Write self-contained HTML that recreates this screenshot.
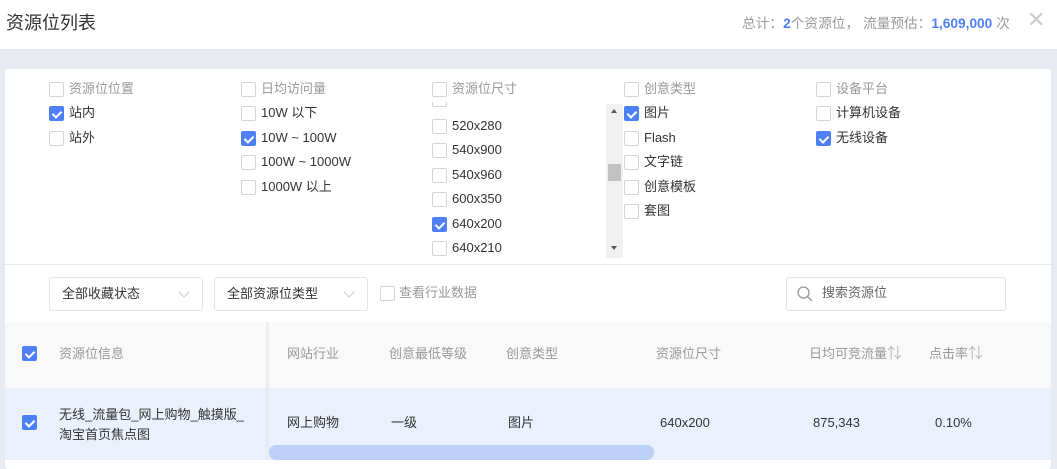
<!DOCTYPE html>
<html><head><meta charset="utf-8"><style>
*{box-sizing:border-box;margin:0;padding:0}
body{width:1057px;height:468px;overflow:hidden;background:#e8ebf2;font-family:"Liberation Sans","Noto Sans CJK SC",sans-serif;position:relative;color:#333}
.a{position:absolute;white-space:nowrap}
.cb{position:absolute;width:15px;height:15px;border:1px solid #d4d4d4;border-radius:2px;background:#fff}
.cb.on{background:#4f80f7;border-color:#4f80f7}
.cb.on::after{content:"";position:absolute;left:4px;top:1.5px;width:4px;height:7px;border:solid #fff;border-width:0 2px 2px 0;transform:rotate(45deg)}
.t{position:absolute;font-size:13px;line-height:16px;color:#333;white-space:nowrap}
.g{color:#999}
.sel{position:absolute;top:277px;height:34px;border:1px solid #e3e3e3;border-radius:3px;background:#fff;font-size:13px;line-height:32px;padding-left:12px;color:#333}
.sel::after{content:"";position:absolute;right:14px;top:10px;width:7px;height:7px;border:solid #ccc;border-width:0 1px 1px 0;transform:rotate(45deg)}
.h{position:absolute;top:346px;font-size:13px;line-height:16px;color:#999;white-space:nowrap}
.d{position:absolute;top:415px;font-size:13px;line-height:16px;color:#333;white-space:nowrap}
</style></head><body>
<div class="a" style="left:0;top:0;width:1057px;height:50px;background:#fff;border-bottom:1px solid #e0e3ea"></div>
<div class="a" style="left:6px;top:9px;font-size:18px;color:#333">资源位列表</div>
<div class="a" style="left:742px;top:12px;font-size:13.7px;color:#999">总计：<b style="color:#4f80f7">2</b>个资源位， 流量预估：<b style="color:#4f80f7">1,609,000</b> 次</div>
<div class="a" style="left:1027px;top:8px;font-size:22px;color:#ccc;line-height:24px">✕</div>

<div class="a" style="left:5px;top:69px;width:1046px;height:400px;background:#fff;border-radius:4px"></div>

<div class="cb" style="left:49px;top:82px"></div><div class="t g" style="left:69px;top:81px">资源位位置</div>
<div class="cb on" style="left:49px;top:106px"></div><div class="t" style="left:69px;top:105px">站内</div>
<div class="cb" style="left:49px;top:131px"></div><div class="t" style="left:69px;top:130px">站外</div>

<div class="cb" style="left:241px;top:82px"></div><div class="t g" style="left:261px;top:81px">日均访问量</div>
<div class="cb" style="left:241px;top:106px"></div><div class="t" style="left:261px;top:105px">10W 以下</div>
<div class="cb on" style="left:241px;top:131px"></div><div class="t" style="left:261px;top:130px">10W ~ 100W</div>
<div class="cb" style="left:241px;top:155px"></div><div class="t" style="left:261px;top:154px">100W ~ 1000W</div>
<div class="cb" style="left:241px;top:180px"></div><div class="t" style="left:261px;top:179px">1000W 以上</div>

<div class="cb" style="left:432px;top:82px"></div><div class="t g" style="left:452px;top:81px">资源位尺寸</div>
<div class="a" style="left:430px;top:102px;width:176px;height:156px;overflow:hidden">
<div class="cb" style="left:2px;top:-10px"></div>
<div class="cb" style="left:2px;top:17px"></div><div class="t" style="left:22px;top:16px">520x280</div>
<div class="cb" style="left:2px;top:41px"></div><div class="t" style="left:22px;top:40px">540x900</div>
<div class="cb" style="left:2px;top:66px"></div><div class="t" style="left:22px;top:65px">540x960</div>
<div class="cb" style="left:2px;top:90px"></div><div class="t" style="left:22px;top:89px">600x350</div>
<div class="cb on" style="left:2px;top:115px"></div><div class="t" style="left:22px;top:114px">640x200</div>
<div class="cb" style="left:2px;top:139px"></div><div class="t" style="left:22px;top:138px">640x210</div>
</div>
<div class="a" style="left:606px;top:104px;width:17px;height:154px;background:#f0f0f0"></div>
<div class="a" style="left:611px;top:109px;border:3.5px solid transparent;border-bottom:4px solid #555;border-top:0"></div>
<div class="a" style="left:611px;top:246px;border:3.5px solid transparent;border-top:4px solid #555;border-bottom:0"></div>
<div class="a" style="left:608px;top:164px;width:13px;height:17px;background:#c1c1c1"></div>

<div class="cb" style="left:624px;top:82px"></div><div class="t g" style="left:644px;top:81px">创意类型</div>
<div class="cb on" style="left:624px;top:106px"></div><div class="t" style="left:644px;top:105px">图片</div>
<div class="cb" style="left:624px;top:131px"></div><div class="t" style="left:644px;top:130px">Flash</div>
<div class="cb" style="left:624px;top:155px"></div><div class="t" style="left:644px;top:154px">文字链</div>
<div class="cb" style="left:624px;top:180px"></div><div class="t" style="left:644px;top:179px">创意模板</div>
<div class="cb" style="left:624px;top:204px"></div><div class="t" style="left:644px;top:203px">套图</div>

<div class="cb" style="left:816px;top:82px"></div><div class="t g" style="left:836px;top:81px">设备平台</div>
<div class="cb" style="left:816px;top:106px"></div><div class="t" style="left:836px;top:105px">计算机设备</div>
<div class="cb on" style="left:816px;top:131px"></div><div class="t" style="left:836px;top:130px">无线设备</div>

<div class="a" style="left:5px;top:264px;width:1046px;height:1px;background:#e8e8e8"></div>

<div class="sel" style="left:49px;width:154px">全部收藏状态</div>
<div class="sel" style="left:214px;width:154px">全部资源位类型</div>
<div class="cb" style="left:380px;top:286px"></div><div class="t g" style="left:399px;top:285px">查看行业数据</div>
<div class="a" style="left:786px;top:277px;width:220px;height:34px;border:1px solid #e3e3e3;border-radius:3px;background:#fff"></div>
<svg class="a" style="left:796px;top:285px" width="18" height="18" viewBox="0 0 18 18"><circle cx="7.5" cy="7.5" r="5.5" fill="none" stroke="#999" stroke-width="1.3"/><path d="M11.5 11.5L16 16" stroke="#999" stroke-width="1.3"/></svg>
<div class="t g" style="left:822px;top:285px;color:#666">搜索资源位</div>

<div class="a" style="left:5px;top:322px;width:1046px;height:66px;background:#f9f9f9"></div>
<div class="a" style="left:5px;top:388px;width:1046px;height:72px;background:#ebf1fc"></div>
<div class="a" style="left:266px;top:322px;width:4px;height:138px;background:linear-gradient(to right,#e8e8e8,rgba(0,0,0,0))"></div>
<div class="cb on" style="left:22px;top:346px"></div>
<div class="h" style="left:59px">资源位信息</div>
<div class="h" style="left:287px">网站行业</div>
<div class="h" style="left:389px">创意最低等级</div>
<div class="h" style="left:506px">创意类型</div>
<div class="h" style="left:656px">资源位尺寸</div>
<div class="h" style="left:809px">日均可竞流量<span style="color:#bbb;font-size:15px">⇅</span></div>
<div class="h" style="left:929px">点击率<span style="color:#bbb;font-size:15px">⇅</span></div>

<div class="cb on" style="left:22px;top:415px"></div>
<div class="a" style="left:59px;top:405px;font-size:13px;line-height:20px;color:#333">无线_流量包_网上购物_触摸版_<br>淘宝首页焦点图</div>
<div class="d" style="left:287px">网上购物</div>
<div class="d" style="left:391px">一级</div>
<div class="d" style="left:508px">图片</div>
<div class="d" style="left:660px">640x200</div>
<div class="d" style="left:813px">875,343</div>
<div class="d" style="left:935px">0.10%</div>
<div class="a" style="left:269px;top:445px;width:385px;height:15px;border-radius:7px;background:#bfd0f8"></div>
</body></html>
